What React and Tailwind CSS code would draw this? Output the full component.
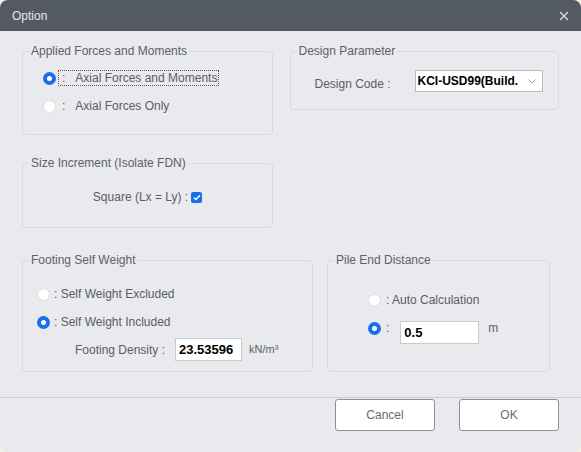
import React from 'react'

const Radio = ({ checked }) => (
  <span
    className={
      checked
        ? 'inline-block w-[13px] h-[13px] rounded-full bg-white border-[4px] border-[#1a6ee8] shrink-0'
        : 'inline-block w-[13px] h-[13px] rounded-full bg-white border border-[#dcdde0] shrink-0'
    }
  />
)

const Group = ({ title, className, children }) => (
  <fieldset className={'border border-[#d9dade] rounded-[4px] px-0 ' + className}>
    <legend className="ml-[6px] px-[2px] leading-[16px] text-[12px] text-[#5f6062]">{title}</legend>
    {children}
  </fieldset>
)

const App = () => {
  return (
    <div className="w-[581px] h-[452px] bg-[#f4f1e6] font-['Liberation_Sans',Arial,sans-serif]">
      <div className="w-full h-full rounded-[8px] overflow-hidden bg-[#e9eaee] flex flex-col">
        {/* title bar */}
        <div className="h-[31px] shrink-0 bg-[#545a62] flex items-center justify-between pl-[12px] pr-[11px]">
          <span className="text-[12px] text-[#e6e7e9]">Option</span>
          <svg width="10" height="10" viewBox="0 0 10 10" className="mr-[1px]">
            <path d="M1 1 L9 9 M9 1 L1 9" stroke="#d9dbde" strokeWidth="1.4" />
          </svg>
        </div>

        <div className="flex-1 flex flex-col px-[22px] pt-[12px] text-[12px] text-[#5c5d60]">
          {/* row 1 */}
          <div className="flex items-start">
            <Group title="Applied Forces and Moments" className="w-[251px] h-[92px]">
              <div className="flex flex-col gap-[12px] pt-[11px] pl-[20px]">
                <div className="flex items-center h-[16px]">
                  <Radio checked />
                  <span className="ml-[2px] border border-dotted border-[#555] leading-[14px] pl-[3px] pr-[1px]">
                    :&nbsp;&nbsp;&nbsp;Axial Forces and Moments
                  </span>
                </div>
                <div className="flex items-center h-[16px]">
                  <Radio />
                  <span className="ml-[6px] leading-[16px]">:&nbsp;&nbsp;&nbsp;Axial Forces Only</span>
                </div>
              </div>
            </Group>

            <Group title="Design Parameter" className="ml-[17px] w-[270px] h-[67px]">
              <div className="flex items-start pt-[11px] pl-[24px]">
                <span className="w-[100px] mt-[6px] leading-[16px]">Design Code :</span>
                <div className="w-[128px] h-[22px] bg-white border border-[#b9babd] flex items-center pl-[2px] pr-[6px] overflow-hidden">
                  <span className="flex-1 text-[12px] font-bold text-black whitespace-nowrap overflow-hidden">KCI-USD99(Build.</span>
                  <svg width="8" height="5" viewBox="0 0 8 5" className="ml-[2px] shrink-0">
                    <path d="M0.5 0.5 L4 4 L7.5 0.5" stroke="#9a9b9e" strokeWidth="1" fill="none" />
                  </svg>
                </div>
              </div>
            </Group>
          </div>

          {/* row 2 */}
          <Group title="Size Increment (Isolate FDN)" className="mt-[20px] w-[251px] h-[73px]">
            <div className="flex justify-center items-center pt-[18px] h-[34px]">
              <span className="leading-[16px]">Square (Lx = Ly) :</span>
              <span className="ml-[3px] w-[11px] h-[11px] rounded-[2px] bg-[#1a6ee8] flex items-center justify-center">
                <svg width="8" height="7" viewBox="0 0 8 7">
                  <path d="M1 3.6 L3 5.5 L7 1.3" stroke="white" strokeWidth="1.5" fill="none" />
                </svg>
              </span>
            </div>
          </Group>

          {/* row 3 */}
          <div className="flex items-start mt-[24px]">
            <Group title="Footing Self Weight" className="w-[291px] h-[120px]">
              <div className="flex flex-col pt-[18px] pl-[14px]">
                <div className="flex items-center h-[16px]">
                  <Radio />
                  <span className="ml-[4px] leading-[16px]">: Self Weight Excluded</span>
                </div>
                <div className="flex items-center h-[16px] mt-[12px]">
                  <Radio checked />
                  <span className="ml-[4px] leading-[16px]">: Self Weight Included</span>
                </div>
                <div className="flex items-center mt-[8px] ml-[38px]">
                  <span className="w-[100px] leading-[16px]">Footing Density :</span>
                  <div className="w-[67px] h-[23px] bg-white border border-[#c9cacd] flex items-center pl-[3px]">
                    <span className="text-[13px] font-bold text-black">23.53596</span>
                  </div>
                  <span className="ml-[7px] text-[11px]">kN/m³</span>
                </div>
              </div>
            </Group>

            <Group title="Pile End Distance" className="ml-[14px] w-[223px] h-[120px]">
              <div className="flex flex-col pt-[24px] pl-[40px]">
                <div className="flex items-center h-[16px]">
                  <Radio />
                  <span className="ml-[5px] leading-[16px]">: Auto Calculation</span>
                </div>
                <div className="flex items-start mt-[13px]">
                  <div className="flex items-center h-[14px]">
                    <Radio checked />
                    <span className="ml-[5px] leading-[14px]">:</span>
                  </div>
                  <div className="ml-[11px] w-[79px] h-[23px] bg-white border border-[#c9cacd] flex items-center pl-[3px]">
                    <span className="text-[13px] font-bold text-black">0.5</span>
                  </div>
                  <span className="ml-[9px] h-[14px] leading-[14px]">m</span>
                </div>
              </div>
            </Group>
          </div>

          <div className="flex-1" />
        </div>

        {/* footer */}
        <div className="shrink-0 border-t border-[#cdced2] h-[55px] flex justify-end items-start gap-[24px] pr-[22px]">
          <button className="mt-[1px] w-[100px] h-[32px] bg-white border border-[#8e8f92] rounded-[3px] text-[12px] text-[#6a6b6e]">Cancel</button>
          <button className="mt-[1px] w-[100px] h-[32px] bg-white border border-[#8e8f92] rounded-[3px] text-[12px] text-[#6a6b6e]">OK</button>
        </div>
      </div>
    </div>
  )
}

export default App
